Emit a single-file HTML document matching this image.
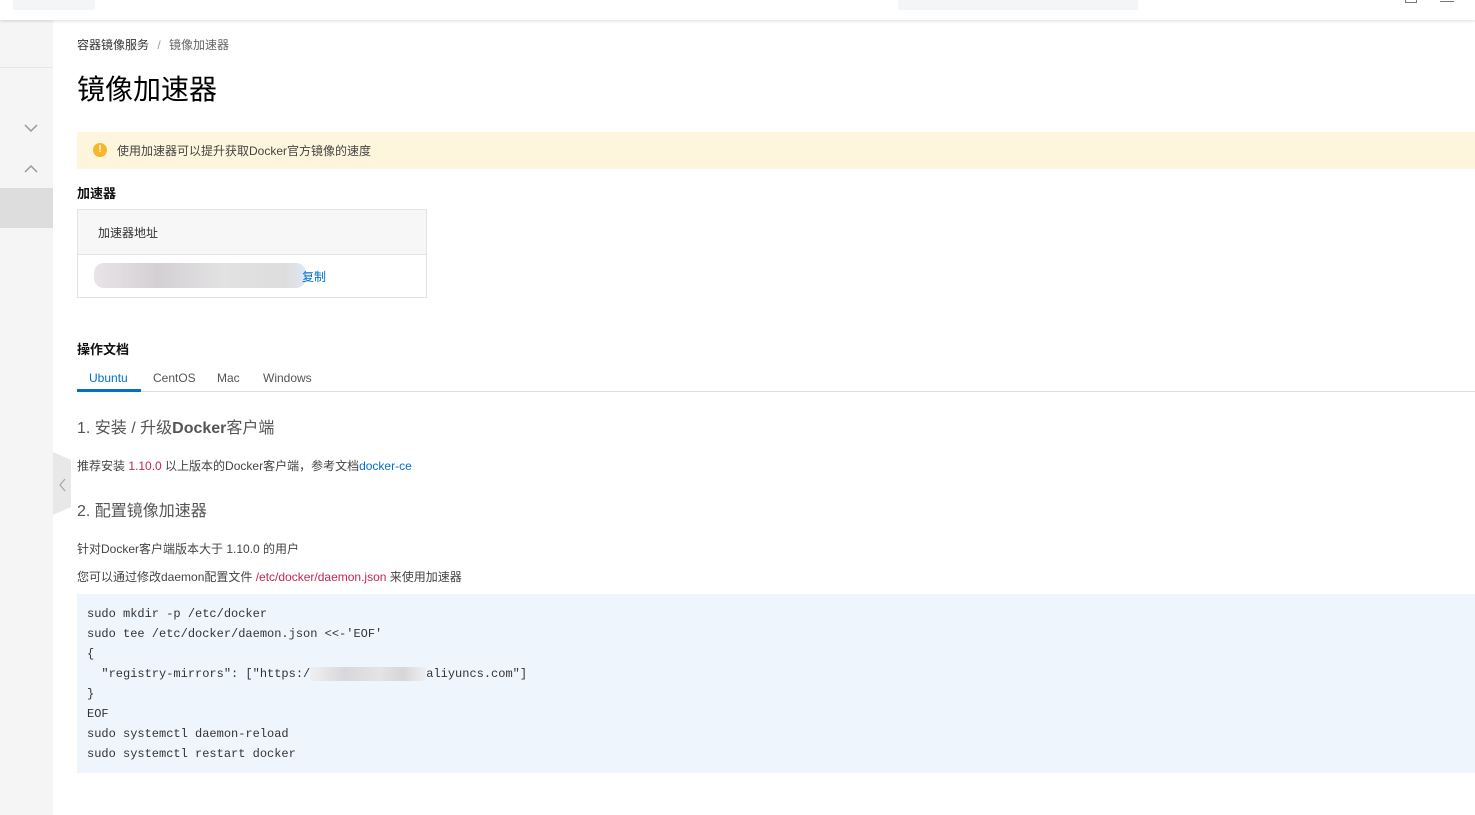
<!DOCTYPE html>
<html><head><meta charset="utf-8"><style>
*{margin:0;padding:0;box-sizing:border-box}
body{width:1475px;height:815px;overflow:hidden;background:#fff;font-family:"Liberation Sans","Noto Sans CJK SC",sans-serif;color:#333;position:relative;font-size:12px}
.top{position:absolute;left:0;top:0;width:1475px;height:20px;background:#fff;box-shadow:0 1px 3px rgba(0,0,0,.15);z-index:2}
.side{position:absolute;left:0;top:20px;width:53px;height:795px;background:#f5f5f5}
.abs{position:absolute}
.main{position:absolute;left:77px}
pre{font-family:"Liberation Mono",monospace;font-size:12px;line-height:20px;color:#333}
</style></head><body>
<div class="top">
 <div class="abs" style="left:13px;top:0;width:82px;height:10px;background:#f4f5f7"></div>
 <div class="abs" style="left:898px;top:0;width:240px;height:10px;background:#f4f5f7"></div>
 <div class="abs" style="left:1405px;top:0;width:12px;height:3px;border:1px solid #777;border-top:none"></div>
 <div class="abs" style="left:1440px;top:0;width:14px;height:2px;border-bottom:1px solid #777"></div>
</div>
<div class="side">
 <div class="abs" style="left:0;top:47px;width:53px;height:1px;background:#e5e5e5"></div>
 <svg class="abs" style="left:24px;top:103px" width="14" height="10"><path d="M1 2l6 6 6-6" stroke="#999" stroke-width="1.5" fill="none"/></svg>
 <svg class="abs" style="left:24px;top:144px" width="14" height="10"><path d="M1 8l6-6 6 6" stroke="#999" stroke-width="1.5" fill="none"/></svg>
 <div class="abs" style="left:0;top:168px;width:53px;height:40px;background:#ddd"></div>
</div>
<svg class="abs" style="left:53px;top:452px" width="18" height="63"><path d="M0 0L18 8V55L0 63Z" fill="#e8e8e8"/><path d="M12 27l-5 6 5 6" stroke="#aaa" stroke-width="1.3" fill="none"/></svg>

<div class="main" style="top:36px;font-size:12px;color:#333">容器镜像服务 <span style="color:#999;margin:0 5px">/</span> <span style="color:#666">镜像加速器</span></div>
<div class="main" style="top:72px;font-size:28px;color:#000;line-height:36px">镜像加速器</div>
<div class="abs" style="left:77px;top:132px;width:1398px;height:37px;background:#fdf5dc"></div>
<div class="abs" style="left:93px;top:143px;width:14px;height:14px;border-radius:50%;background:#f9b52c;color:#fff;font-size:10px;font-weight:bold;text-align:center;line-height:14px">!</div>
<div class="abs" style="left:117px;top:142px;color:#444">使用加速器可以提升获取Docker官方镜像的速度</div>
<div class="main" style="top:183px;font-size:13px;font-weight:bold;color:#111">加速器</div>
<div class="abs" style="left:77px;top:209px;width:350px;height:89px;border:1px solid #e3e3e3">
 <div style="height:45px;background:#f7f7f7;border-bottom:1px solid #e3e3e3;padding:14px 20px;color:#333">加速器地址</div>
 <div class="abs" style="left:16px;top:53px;width:212px;height:25px;border-radius:10px;background:linear-gradient(90deg,#e8e4e8,#d4d0d4 30%,#e2e2e2 60%,#ddd 90%,#dfe8f5)"></div>
 <div class="abs" style="left:224px;top:58px;color:#0070cc">复制</div>
</div>
<div class="main" style="top:339px;font-size:13px;font-weight:bold;color:#111">操作文档</div>
<div class="abs" style="left:77px;top:391px;width:1398px;height:1px;background:#ddd"></div>
<div class="abs" style="left:77px;top:389px;width:64px;height:3px;background:#0070cc"></div>
<div class="abs" style="left:89px;top:371px;color:#0070cc">Ubuntu</div>
<div class="abs" style="left:153px;top:371px;color:#555">CentOS</div>
<div class="abs" style="left:217px;top:371px;color:#555">Mac</div>
<div class="abs" style="left:263px;top:371px;color:#555">Windows</div>
<div class="main" style="top:414px;font-size:16px;color:#555">1. 安装 / 升级<b>Docker</b>客户端</div>
<div class="main" style="top:457px;color:#444">推荐安装 <span style="color:#c7254e">1.10.0</span> 以上版本的Docker客户端，参考文档<span style="color:#0070cc">docker-ce</span></div>
<div class="main" style="top:497px;font-size:16px;color:#555">2. 配置镜像加速器</div>
<div class="main" style="top:540px;color:#444">针对Docker客户端版本大于 1.10.0 的用户</div>
<div class="main" style="top:568px;color:#444">您可以通过修改daemon配置文件 <span style="color:#c7254e">/etc/docker/daemon.json</span> 来使用加速器</div>
<div class="abs" style="left:77px;top:594px;width:1398px;height:179px;background:#eff5fd;padding:10px 10px">
<pre>sudo mkdir -p /etc/docker
sudo tee /etc/docker/daemon.json &lt;&lt;-'EOF'
{
  "registry-mirrors": ["https:/<span style="display:inline-block;width:116px;height:14px;vertical-align:middle;background:linear-gradient(90deg,#f0f0f2,#d8d8dc 30%,#e4e4e6 60%,#d6d6da 80%,#f0f0f2)"></span>aliyuncs.com"]
}
EOF
sudo systemctl daemon-reload
sudo systemctl restart docker</pre>
</div>
</body></html>
